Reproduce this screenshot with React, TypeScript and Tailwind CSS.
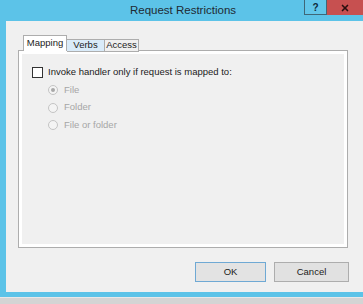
import { X } from 'lucide-react';

const font = { fontFamily: '"Liberation Sans", Arial, sans-serif' };

function Radio({ label, checked }: { label: string; checked?: boolean }) {
  return (
    <div className="flex h-[17.5px] items-center gap-[6px]">
      <span className="flex h-[10px] w-[10px] items-center justify-center rounded-full border border-[#c4c4c4] bg-[#f4f4f4]">
        {checked && <span className="h-[4px] w-[4px] rounded-full bg-[#a8a8a8]" />}
      </span>
      <span className="text-[9.5px] text-[#a6a6a6]">{label}</span>
    </div>
  );
}

export default function App() {
  return (
    <div className="flex h-[304px] w-[363px] flex-col overflow-hidden bg-[#5cc3e8] text-[#1b1b1b]" style={font}>
      <div className="relative flex h-[21px] shrink-0 items-center justify-center">
        <span className="pl-[3px] text-[11.5px] text-[#1f2a33]">Request Restrictions</span>
        <div className="absolute right-0 top-0 flex">
          <div className="flex h-[15px] w-[23px] items-center justify-center border border-t-0 border-[#3f6778] bg-[#62c6ea] text-[10px] font-bold text-[#0e2a3a]">
            ?
          </div>
          <div className="flex h-[15px] w-[36px] items-center justify-center bg-[#c75050]">
            <X size={10} strokeWidth={4} className="text-[#2a0f0f]" />
          </div>
        </div>
      </div>
      <div className="flex h-[271px] shrink-0">
        <div className="w-[6px] shrink-0" />
        <div className="flex flex-1 flex-col bg-[#f0f0f0] pl-[12px] pt-[14px]">
          <div className="relative flex w-[330px] flex-col">
            <div className="relative z-10 ml-[5px] flex items-end text-[9.5px]">
              <div className="flex h-[16px] w-[44px] items-center justify-center border border-b-0 border-[#adadad] bg-white">Mapping</div>
              <div className="mb-[-1px] flex h-[13px] w-[38px] items-center justify-center border border-l-0 border-[#adadad] bg-[#d9ebf9]">Verbs</div>
              <div className="mb-[-1px] flex h-[13px] w-[34px] items-center justify-center border border-l-0 border-[#adadad] bg-[#f0f0f0]">Access</div>
            </div>
            <div className="mt-[-1px] h-[198px] border border-[#adadad] bg-white p-[3px]">
              <div className="h-full bg-[#f0f0f0] pl-[10px] pt-[11px]">
                <div className="flex items-center gap-[5px]">
                  <span className="h-[11px] w-[11px] border border-[#333] bg-white" />
                  <span className="text-[9.5px]">Invoke handler only if request is mapped to:</span>
                </div>
                <div className="ml-[16px] mt-[2px] flex flex-col">
                  <Radio label="File" checked />
                  <Radio label="Folder" />
                  <Radio label="File or folder" />
                </div>
              </div>
            </div>
          </div>
          <div className="ml-[177px] mt-[14px] flex gap-[8px] text-[9.5px]">
            <div className="flex h-[20px] w-[71px] items-center justify-center border border-[#6fa9d4] bg-[#e3e3e3]">OK</div>
            <div className="flex h-[20px] w-[75px] items-center justify-center border border-[#adadad] bg-[#e1e1e1]">Cancel</div>
          </div>
        </div>
      </div>
      <div className="h-[5px] shrink-0" />
      <div className="flex-1 border-t border-[#e8e8e8] bg-[#d4d4d4]" />
    </div>
  );
}
